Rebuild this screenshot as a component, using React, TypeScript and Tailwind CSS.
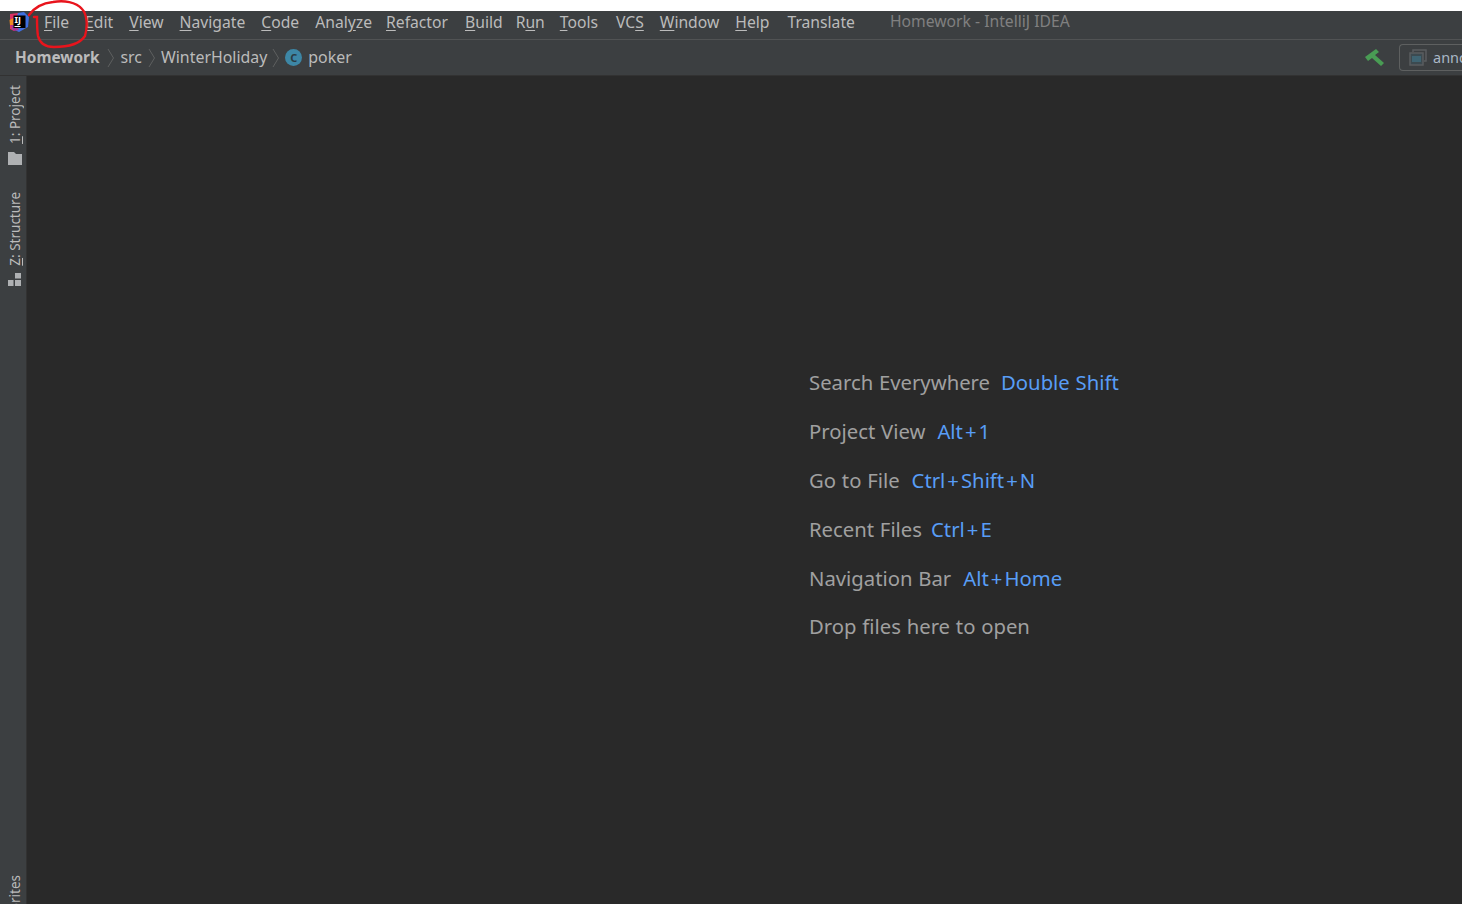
const font = { fontFamily: '"Noto Sans", "Open Sans", sans-serif' };

const menus: [string, string, string, string][] = [
  ['', 'F', 'ile', ''],
  ['', 'E', 'dit', ''],
  ['', 'V', 'iew', ''],
  ['', 'N', 'avigate', ''],
  ['', 'C', 'ode', ''],
  ['Anal', 'y', 'ze', ''],
  ['', 'R', 'efactor', '-ml-[2px]'],
  ['', 'B', 'uild', 'ml-px'],
  ['R', 'u', 'n', '-ml-[3px]'],
  ['', 'T', 'ools', '-ml-px'],
  ['VC', 'S', '', 'ml-[2px]'],
  ['', 'W', 'indow', ''],
  ['', 'H', 'elp', ''],
];

const hints = [
  { label: 'Search Everywhere', keys: ['Double Shift'], gap: 'gap-[11px]' },
  { label: 'Project View', keys: ['Alt', '1'], gap: 'gap-[12px]' },
  { label: 'Go to File', keys: ['Ctrl', 'Shift', 'N'], gap: 'gap-[12px]' },
  { label: 'Recent Files', keys: ['Ctrl', 'E'], gap: 'gap-[9px]' },
  { label: 'Navigation Bar', keys: ['Alt', 'Home'], gap: 'gap-[12px]' },
];

function Logo() {
  return (
    <div className="relative w-[20px] h-[20px] shrink-0 -mt-[2px]">
      <svg width="20" height="20" viewBox="0 0 20 20" className="absolute inset-0">
        <path d="M1 2 L9 1 L12 6 L5 19 L1 17 Z" fill="#dc3163" />
        <path d="M9 1 L15 0 L20 5 L19 15 L10 20 L3 17 Z" fill="#3f6fe0" />
        <path d="M1 11 L5 19 L10 18 L4 8 Z" fill="#a7318f" />
        <path d="M0.5 8 L4.5 6 L4.5 13 L1 13 Z" fill="#f08a24" />
        <rect x="4.5" y="3.5" width="12" height="12.5" fill="#000000" />
        <rect x="5.5" y="14" width="6" height="1" fill="#ffffff" />
      </svg>
      <span className="absolute left-[5.5px] top-[3px] text-[9px] leading-[10px] font-bold text-white whitespace-nowrap">IJ</span>
    </div>
  );
}

function Chevron() {
  return (
    <svg width="8" height="20" viewBox="0 0 8 20" className="shrink-0">
      <path d="M1 1 L6.5 10 L1 19" fill="none" stroke="#5e6060" strokeWidth="1" />
    </svg>
  );
}

function SideTab({ mark, rest, children }: { mark: string; rest: string; children?: React.ReactNode }) {
  return (
    <div className="flex flex-col items-center w-[30px] text-[13.5px] leading-[26px] text-[#bbbbbb]">
      <span className="[writing-mode:vertical-rl] rotate-180 whitespace-nowrap">
        <span className="underline underline-offset-0">{mark}</span>
        {rest}
      </span>
      {children}
    </div>
  );
}

export default function App() {
  return (
    <div className="relative h-[904px] w-[1462px] overflow-hidden bg-white flex flex-col pt-[11px]" style={font}>
      {/* Menu bar */}
      <div className="h-[29px] shrink-0 bg-[#3c3f41] border-b border-[#515354] flex items-center pl-[9px] pb-[4px] text-[15.7px] text-[#bbbbbb]">
        <Logo />
        <div className="flex items-center gap-[16px] ml-[15px]">
          {menus.map(([a, u, b, adjust]) => (
            <span key={a + u + b} className={`whitespace-nowrap ${adjust}`}>
              {a}
              <span className="underline underline-offset-2">{u}</span>
              {b}
            </span>
          ))}
          <span className="ml-[2px]">Translate</span>
        </div>
        <span className="ml-[35px] text-[#808080] -mt-[2px]">Homework - IntelliJ IDEA</span>
      </div>

      {/* Navigation bar */}
      <div className="h-[36px] shrink-0 bg-[#3c3f41] border-b border-[#323232] flex items-center pl-[15px] text-[15.9px] text-[#bbbbbb] overflow-hidden">
        <span className="font-bold text-[15.4px]">Homework</span>
        <span className="ml-[7px] mr-[6px]"><Chevron /></span>
        <span>src</span>
        <span className="ml-[6px] mr-[5px]"><Chevron /></span>
        <span>WinterHoliday</span>
        <span className="mx-[5px]"><Chevron /></span>
        <span className="w-[17px] h-[17px] rounded-full bg-[#3d87a6] text-[#2b3a42] text-[11px] font-bold leading-[17px] text-center mr-[6px] shrink-0">C</span>
        <span>poker</span>
        <div className="ml-auto flex items-center shrink-0">
          <svg width="20" height="18" viewBox="0 0 20 18" className="mr-[14px]">
            <path d="M0 8 L11 0 L14 3 L10 6 L19 14 L16 17 L7 9 L3 12 Z" fill="#499c54" />
          </svg>
          <div className="w-[63px] h-[27px] border-y border-l border-[#5e6060] rounded-l-[4px] flex items-center pl-[9px] gap-[6px] overflow-hidden">
            <svg width="18" height="17" viewBox="0 0 18 17" className="shrink-0">
              <path d="M4 3 V1 H17 V12 H15" fill="none" stroke="#5a5d5f" strokeWidth="1.5" />
              <rect x="1" y="4" width="13" height="12" fill="#3c4a50" stroke="#5a5d5f" strokeWidth="1.5" />
              <rect x="3" y="7" width="9" height="6" fill="#3f6472" />
            </svg>
            <span className="text-[14.5px] text-[#a9b7c6] whitespace-nowrap">annotations</span>
          </div>
        </div>
      </div>

      {/* Body */}
      <div className="flex-1 flex min-h-0 overflow-hidden">
        <div className="w-[27px] shrink-0 bg-[#3c3f41] border-r border-[#323232] flex flex-col">
          <div className="pt-[9px]">
            <SideTab mark="1" rest=": Project">
              <svg width="16" height="13" viewBox="0 0 16 13" className="mt-[8px]">
                <path d="M1 0 H7 L9 2 H15 V13 H1 Z" fill="#afb1b3" />
              </svg>
            </SideTab>
          </div>
          <div className="pt-[27px]">
            <SideTab mark="Z" rest=": Structure">
              <svg width="14" height="13" viewBox="0 0 14 13" className="mt-[7px]">
                <rect x="7" y="0" width="6" height="5.5" fill="#afb1b3" />
                <rect x="0" y="7" width="5.5" height="6" fill="#afb1b3" />
                <rect x="7" y="7" width="6" height="6" fill="#afb1b3" />
              </svg>
            </SideTab>
          </div>
          <div className="mt-auto -mb-[43px]">
            <SideTab mark="2" rest=": Favorites" />
          </div>
        </div>

        {/* Empty editor hints */}
        <div className="flex-1 bg-[#292929] pl-[782px] pt-[292px] text-[20.3px] [word-spacing:0.5px] leading-[28px] text-[#a0a0a0]">
          <div className="flex flex-col gap-[20.9px]">
            {hints.map((h) => (
              <div key={h.label} className={`flex whitespace-nowrap ${h.gap}`}>
                <span>{h.label}</span>
                <span className="text-[#589df6]">
                  {h.keys.map((k, i) => (
                    <span key={k}>
                      {i > 0 && <span className="mx-[2px]">+</span>}
                      {k}
                    </span>
                  ))}
                </span>
              </div>
            ))}
            <div>Drop files here to open</div>
          </div>
        </div>
      </div>

      {/* Red hand-drawn annotation over the File menu */}
      <svg width="62" height="52" viewBox="0 0 62 52" className="absolute left-[28px] top-0 pointer-events-none">
        <path
          d="M1 15 C6 8 15 3 25 2 C36 0 48 2 54 9 C59 14 60 26 57 36 C51 45 38 47 26 47 C18 47 12 44 10 36 C9 30 9 22 9 17 L6 17"
          fill="none"
          stroke="#e8141c"
          strokeWidth="2.4"
          strokeLinecap="round"
        />
      </svg>
    </div>
  );
}
